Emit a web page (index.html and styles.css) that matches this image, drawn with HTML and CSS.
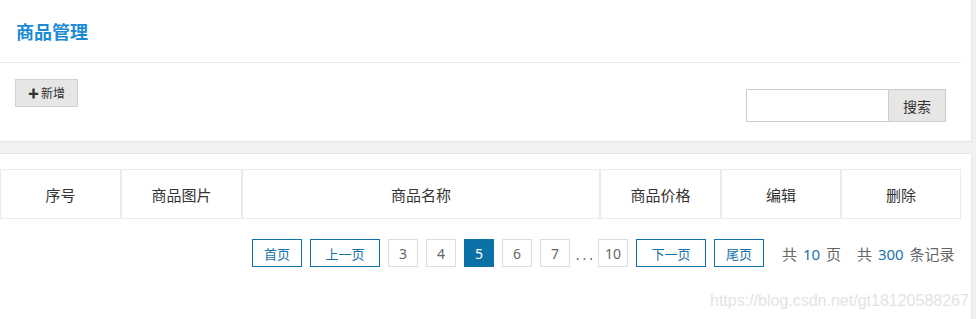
FILE: index.html
```html
<!DOCTYPE html>
<html lang="zh-CN">
<head>
<meta charset="utf-8">
<title>商品管理</title>
<link rel="stylesheet" href="styles.css">
</head>
<body>
<div class="page">
  <section class="card card-top">
    <div class="card-head">
      <h1 class="title">商品管理</h1>
    </div>
    <div class="toolbar">
      <button class="btn btn-add"><span class="plus">✚</span>新增</button>
      <div class="search">
        <input class="search-input" type="text">
        <button class="btn btn-search">搜索</button>
      </div>
    </div>
  </section>

  <section class="card card-list">
    <table class="grid">
      <thead>
        <tr>
          <th class="c-121">序号</th>
          <th class="c-121">商品图片</th>
          <th class="c-wide">商品名称</th>
          <th class="c-121">商品价格</th>
          <th class="c-120">编辑</th>
          <th class="c-120">删除</th>
        </tr>
      </thead>
    </table>

    <div class="pager">
      <a class="pg pg-link pg-2">首页</a>
      <a class="pg pg-link pg-3">上一页</a>
      <a class="pg pg-num">3</a>
      <a class="pg pg-num">4</a>
      <a class="pg pg-num active">5</a>
      <a class="pg pg-num">6</a>
      <a class="pg pg-num pg-before-gap">7</a>
      <span class="ellipsis">...</span>
      <a class="pg pg-num">10</a>
      <a class="pg pg-link pg-3">下一页</a>
      <a class="pg pg-link pg-2">尾页</a>
      <span class="info info-first">共 <em>10</em> 页</span>
      <span class="info">共 <em>300</em> 条记录</span>
    </div>
  </section>
  <div class="watermark">https://blog.csdn.net/gt18120588267</div>
</div>
</body>
</html>
```

FILE: styles.css
```css
* { box-sizing: border-box; }

html, body {
  margin: 0;
  padding: 0;
  background: #f1f1f1;
  font-family: "Noto Sans", "Noto Sans CJK SC", sans-serif;
  color: #333;
}

.page {
  position: relative;
  width: 972px;
  height: 319px;
  overflow: hidden;
}

.card {
  background: #fff;
  border-right: 1px solid #e6e6e6;
  padding-right: 10px;
}

.card-top {
  height: 142px;
  border-bottom: 1px solid #e6e6e6;
}

.card-head {
  height: 63px;
  border-bottom: 1px solid #ebebeb;
  padding: 20px 0 0 16px;
}

.title {
  margin: 0;
  font-size: 18px;
  line-height: 24px;
  font-weight: bold;
  color: #1b8bd6;
}

.toolbar {
  display: flex;
  justify-content: space-between;
  align-items: flex-start;
  padding: 16px 15px 0 15px;
}

.btn {
  font-family: inherit;
  background: #e6e6e6;
  border: 1px solid #d2d2d2;
  color: #333;
  cursor: pointer;
  margin: 0;
}

.btn-add {
  width: 63px;
  height: 28px;
  font-size: 12px;
  padding: 0;
  display: flex;
  align-items: center;
  justify-content: center;
}

.plus {
  font-size: 11px;
  margin-right: 2px;
  color: #333;
}

.search {
  display: flex;
  margin-top: 10px;
}

.search-input {
  width: 143px;
  height: 33px;
  border: 1px solid #cccccc;
  margin: 0;
  padding: 0 6px;
  outline: none;
}

.btn-search {
  width: 57px;
  height: 33px;
  border: 1px solid #cccccc;
  border-left: none;
  font-size: 14px;
  padding: 0;
}

.card-list {
  margin-top: 11px;
  border-top: 1px solid #e6e6e6;
  height: 170px;
  padding-top: 15px;
}

.grid {
  width: 961px;
  border-collapse: separate;
  border-spacing: 0;
  table-layout: fixed;
}

.grid th {
  height: 50px;
  border: 1px solid #ebebeb;
  font-weight: normal;
  font-size: 15px;
  color: #333;
  text-align: center;
  padding: 0;
}

.c-121 { width: 121px; }
.c-120 { width: 120px; }
.c-wide { width: 358px; }

.pager {
  display: flex;
  align-items: center;
  padding-left: 252px;
  margin-top: 20px;
  height: 28px;
}

.pg {
  display: flex;
  align-items: center;
  justify-content: center;
  height: 28px;
  font-size: 13px;
  text-decoration: none;
  margin-right: 8px;
}

.pg-link {
  border: 1px solid #0f73a9;
  color: #1470a8;
}

.pg-2 { width: 50px; }
.pg-3 { width: 70px; }

.pg-num {
  width: 30px;
  border: 1px solid #dddddd;
  color: #666;
  font-size: 14px;
}

.pg-num.active {
  background: #0b71a7;
  border-color: #0b71a7;
  color: #fff;
}

.pg-before-gap { margin-right: 0; }

.ellipsis {
  width: 28px;
  text-align: center;
  font-size: 14px;
  color: #666;
  letter-spacing: 3px;
  padding-left: 4px;
  line-height: 28px;
  padding-top: 4px;
}

.info {
  font-size: 15px;
  color: #666;
  margin-left: 16px;
  word-spacing: 2px;
}

.info-first { margin-left: 10px; }

.info em {
  font-style: normal;
  color: #1a72ad;
}

.watermark {
  position: absolute;
  left: 710px;
  top: 291px;
  font-family: "Liberation Sans", Arial, sans-serif;
  font-size: 16px;
  line-height: 20px;
  color: #e3e3e3;
  white-space: nowrap;
}
```
